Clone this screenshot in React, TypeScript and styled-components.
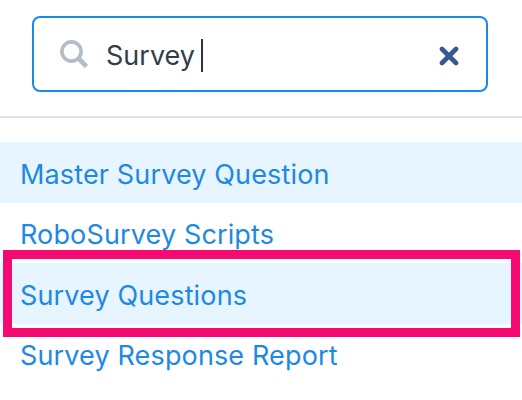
import React from 'react';
import styled, { createGlobalStyle } from 'styled-components';

const GlobalStyle = createGlobalStyle`
  html, body {
    margin: 0;
    padding: 0;
    background: #ffffff;
    font-family: Inter, "Liberation Sans", sans-serif;
  }
`;

const Page = styled.div`
  width: 522px;
  height: 400px;
  overflow: hidden;
  background: #ffffff;
`;

const SearchArea = styled.div`
  padding: 16px 34px 24px 32px;
  border-bottom: 2px solid #e0e2e5;
`;

const SearchBox = styled.div`
  display: flex;
  align-items: center;
  height: 76px;
  box-sizing: border-box;
  border: 2px solid #1e88e5;
  border-radius: 8px;
  padding: 0 27px 0 26px;
  background: #ffffff;
`;

const SearchValue = styled.div`
  flex: 1;
  display: flex;
  align-items: center;
  margin-left: 16px;
  padding-top: 3px;
  font-size: 27px;
  color: #343c47;
`;

const Caret = styled.span`
  width: 2px;
  height: 33px;
  margin-left: 6px;
  background: #2c3440;
`;

const ClearButton = styled.span`
  display: flex;
  margin-top: 3px;
`;

const ResultList = styled.ul`
  list-style: none;
  margin: 24px 0 0;
  padding: 0;
`;

const ResultRow = styled.li<{ $shaded?: boolean }>`
  position: relative;
  height: 60.5px;
  box-sizing: border-box;
  display: flex;
  align-items: center;
  padding: 4px 0 0 20px;
  font-size: 27px;
  letter-spacing: 0.14px;
  color: #1e88e5;
  background: ${(p) => (p.$shaded ? '#e6f5ff' : 'transparent')};
`;

const Callout = styled.div`
  position: absolute;
  left: 3px;
  right: 2px;
  top: -13.5px;
  bottom: -13px;
  border: 9px solid #f50a72;
  pointer-events: none;
`;

const SearchIcon = () => (
  <svg width="30" height="30" viewBox="0 0 30 30" fill="none">
    <circle cx="11.5" cy="12.5" r="9.6" stroke="#b4bcc5" strokeWidth="3.6" />
    <path d="M18.5 19.5l8 8" stroke="#b4bcc5" strokeWidth="4.6" />
  </svg>
);

const ClearIcon = () => (
  <svg width="20" height="20" viewBox="0 0 20 20" fill="none">
    <path d="M3 3l14 14M17 3L3 17" stroke="#37598f" strokeWidth="4.6" strokeLinecap="round" />
  </svg>
);

const App: React.FC = () => (
  <Page>
    <GlobalStyle />
    <SearchArea>
      <SearchBox>
        <SearchIcon />
        <SearchValue>
          Survey
          <Caret />
        </SearchValue>
        <ClearButton>
          <ClearIcon />
        </ClearButton>
      </SearchBox>
    </SearchArea>
    <ResultList>
      <ResultRow $shaded>Master Survey Question</ResultRow>
      <ResultRow>RoboSurvey Scripts</ResultRow>
      <ResultRow $shaded>
        Survey Questions
        <Callout />
      </ResultRow>
      <ResultRow>Survey Response Report</ResultRow>
    </ResultList>
  </Page>
);

export default App;
